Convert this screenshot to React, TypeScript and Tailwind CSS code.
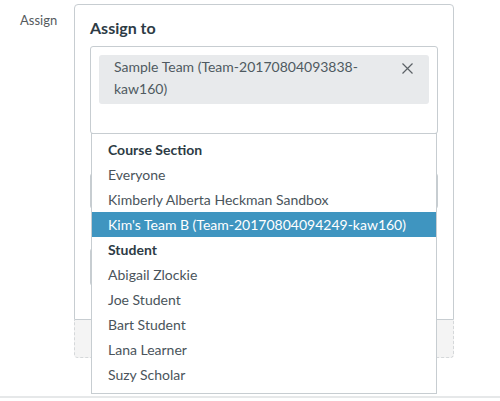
import React from "react";

const items: { label: string; kind: "header" | "item" | "selected" }[] = [
  { label: "Course Section", kind: "header" },
  { label: "Everyone", kind: "item" },
  { label: "Kimberly Alberta Heckman Sandbox", kind: "item" },
  { label: "Kim's Team B (Team-20170804094249-kaw160)", kind: "selected" },
  { label: "Student", kind: "header" },
  { label: "Abigail Zlockie", kind: "item" },
  { label: "Joe Student", kind: "item" },
  { label: "Bart Student", kind: "item" },
  { label: "Lana Learner", kind: "item" },
  { label: "Suzy Scholar", kind: "item" },
];

export default function App() {
  return (
    <div
      className="w-[500px] h-[401px] bg-white overflow-hidden relative"
      style={{ fontFamily: "Lato, 'Open Sans', sans-serif" }}
    >
      <div className="flex pt-[4px]">
        <div className="w-[74px] shrink-0 pl-[20px] pt-[6px] text-[13px] leading-[20px] text-[#555a5e]">
          Assign
        </div>
        <div className="w-[380px] shrink-0">
          <div className="border border-[#c7cdd1] rounded-t-[4px] px-[15px] pt-[11px] h-[316px]">
            <div className="text-[16px] font-bold leading-[24px] text-[#2d3b45] mb-[6px]">
              Assign to
            </div>
            <div className="relative">
              <div className="h-[88px] border border-[#c7cdd1] rounded-[3px] p-[8px]">
                <div className="flex justify-between bg-[#e8eaec] rounded-[3px] pl-[15px] pr-[16px] pt-[1px] pb-[4px] h-[49px]">
                  <div className="text-[14px] leading-[22px] text-[#4f5a61]">
                    Sample Team (Team-20170804093838-
                    <br />
                    kaw160)
                  </div>
                  <div className="pt-[7px]">
                    <svg width="11" height="11" viewBox="0 0 11 11">
                      <path d="M0.5 0.5 L10.5 10.5 M10.5 0.5 L0.5 10.5" stroke="#5b6166" strokeWidth="1.2" fill="none" />
                    </svg>
                  </div>
                </div>
              </div>
              <div className="mt-[39px] h-[36px] border border-[#c7cdd1] rounded-[3px]" />
              <div className="mt-[39px] h-[38px] w-[220px] border border-[#c7cdd1] rounded-[3px]" />
              <div className="absolute left-[1px] top-[87px] w-[346px] bg-white border border-[#c7cdd1] pt-[3px] pb-[6px] z-10">
                {items.map((it) => (
                  <div
                    key={it.label}
                    className={
                      it.kind === "selected"
                        ? "h-[25px] leading-[25px] pl-[16px] text-[14px] bg-[#3f95c0] text-white"
                        : it.kind === "header"
                        ? "h-[25px] leading-[25px] pl-[16px] text-[14px] font-bold text-[#2d3b45]"
                        : "h-[25px] leading-[25px] pl-[16px] text-[14px] text-[#4a545b]"
                    }
                  >
                    {it.label}
                  </div>
                ))}
              </div>
            </div>
          </div>
          <div className="h-[38px] bg-[#f4f4f4] border-x border-b border-dashed border-[#d5d8da] rounded-b-[4px]" />
        </div>
      </div>
      <div className="absolute left-0 right-0 top-[396px] h-[2px] bg-[#e6e8e9]" />
    </div>
  );
}
